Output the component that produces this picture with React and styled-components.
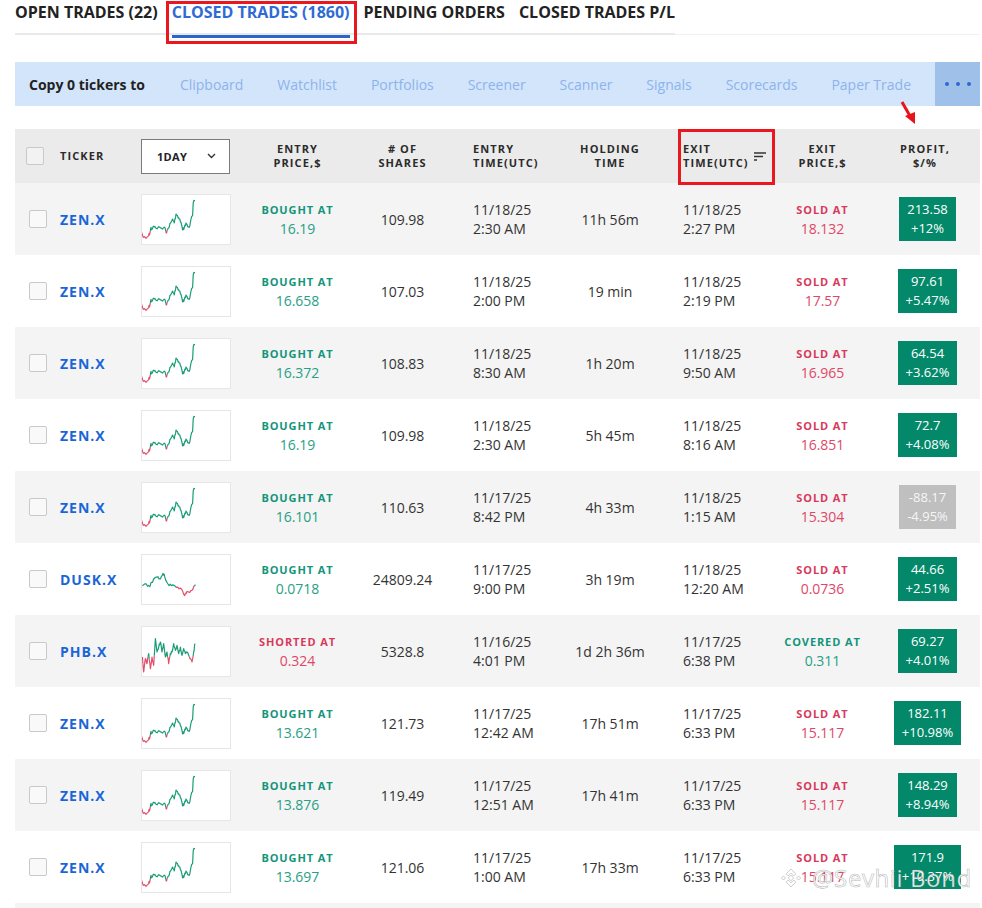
import React from 'react';
import styled, { createGlobalStyle, css } from 'styled-components';

const GlobalStyle = createGlobalStyle`
  html, body { margin: 0; padding: 0; background: #fff; }
  body { font-family: "Open Sans", "Noto Sans", Arial, sans-serif; color: #333; }
  * { box-sizing: border-box; }
`;

const GREEN_LABEL = '#12957a';
const GREEN_VALUE = '#27a085';
const RED_LABEL = '#d8395b';
const RED_VALUE = '#e04767';

const Page = styled.div`
  position: relative;
  width: 982px;
  height: 908px;
  overflow: hidden;
  padding: 0 2px 0 15px;
`;

const TabBar = styled.div`
  display: flex;
  border-bottom: 1px solid #f1f1f1;
`;

const TabList = styled.div`
  display: flex;
  gap: 14px;
  border-bottom: 2px solid #e9e9e9;
  margin-bottom: -1px;
`;

const Tab = styled.div`
  position: relative;
  font-weight: 700;
  font-size: 16px;
  line-height: 22px;
  padding: 1px 0 10px;
  white-space: nowrap;
  color: ${(p) => (p.$active ? '#2f6bd4' : '#222')};
  ${(p) =>
    p.$active &&
    css`
      &::after {
        content: '';
        position: absolute;
        left: 0;
        right: 0;
        bottom: -5px;
        height: 3px;
        background: #2a66c9;
      }
    `}
`;

const Toolbar = styled.div`
  display: flex;
  align-items: center;
  height: 44px;
  margin-top: 27px;
  background: #d3e5fb;
  padding-left: 14px;
`;

const CopyLabel = styled.div`
  font-weight: 700;
  font-size: 14px;
  color: #222;
  white-space: nowrap;
`;

const LinkList = styled.div`
  flex: 1;
  display: flex;
  justify-content: space-between;
  margin: 0 24px 0 35px;
`;

const ToolLink = styled.span`
  font-size: 14px;
  color: #8db3ec;
  white-space: nowrap;
`;

const MoreButton = styled.div`
  width: 45px;
  height: 100%;
  background: #9fc1e9;
  display: flex;
  align-items: center;
  justify-content: center;
  gap: 7px;
`;

const Dot = styled.span`
  width: 4px;
  height: 4px;
  border-radius: 50%;
  background: #2b68d4;
`;

const COLS = '40px 86px 99px 115px 95px 105px 110px 110px 95px 110px';

const Table = styled.div`
  margin-top: 23px;
`;

const HeaderRow = styled.div`
  display: grid;
  grid-template-columns: ${COLS};
  align-items: center;
  height: 54px;
  background: #ebebeb;
`;

const Row = styled.div`
  display: grid;
  grid-template-columns: ${COLS};
  align-items: center;
  height: 72px;
  background: ${(p) => (p.$shade ? '#f4f4f4' : '#fff')};
`;

const Cell = styled.div`
  display: flex;
  flex-direction: column;
  align-items: ${(p) => (p.$left ? 'flex-start' : 'center')};
  padding-left: ${(p) => p.$pl || 0}px;
  text-align: ${(p) => (p.$left ? 'left' : 'center')};
`;

const HeadLabel = styled.div`
  font-size: 11px;
  font-weight: 700;
  letter-spacing: 1.1px;
  line-height: 14px;
  color: #2b2b2b;
  white-space: nowrap;
`;

const SortHead = styled.div`
  display: flex;
  align-items: center;
  gap: 5px;
`;

const Checkbox = styled.span`
  display: block;
  width: 18px;
  height: 18px;
  margin-left: ${(p) => (p.$head ? 11 : 14)}px;
  border: 1px solid #c9c9c9;
  border-radius: 2px;
  background: ${(p) => (p.$head ? '#f2f2f2' : '#f9f9f9')};
`;

const Dropdown = styled.div`
  width: 89px;
  height: 35px;
  border: 1px solid #7a7a7a;
  background: #fff;
  display: flex;
  align-items: center;
  justify-content: space-between;
  padding: 0 13px 0 15px;
  font-size: 11px;
  font-weight: 700;
  letter-spacing: 0.3px;
  color: #222;
`;

const Ticker = styled.div`
  font-size: 14px;
  font-weight: 700;
  letter-spacing: 1px;
  color: #1a66d6;
`;

const ChartBox = styled.div`
  width: 90px;
  height: 51px;
  border: 1px solid #e6e6e6;
  background: #fff;
`;

const TradeLabel = styled.div`
  font-size: 11px;
  font-weight: 700;
  letter-spacing: 0.9px;
  line-height: 19px;
  color: ${(p) => (p.$green ? GREEN_LABEL : RED_LABEL)};
  white-space: nowrap;
`;

const TradeValue = styled.div`
  font-size: 14px;
  line-height: 19px;
  color: ${(p) => (p.$green ? GREEN_VALUE : RED_VALUE)};
`;

const Text = styled.div`
  font-size: 14px;
  line-height: 19px;
  color: #333;
  white-space: nowrap;
`;

const ProfitBox = styled.div`
  display: flex;
  flex-direction: column;
  align-items: center;
  padding: 3px 8px;
  font-size: 13px;
  line-height: 19px;
  background: ${(p) => (p.$loss ? '#bfbfbf' : '#03896a')};
  color: ${(p) => (p.$loss ? '#f6f6f6' : '#fff')};
`;

const Annotation = styled.div`
  position: absolute;
  border: 3px solid #ea1620;
`;

const Arrow = styled.svg`
  position: absolute;
  left: 897px;
  top: 99px;
`;

const Watermark = styled.div`
  position: absolute;
  left: 780px;
  top: 861px;
  display: flex;
  align-items: center;
  gap: 10px;
  pointer-events: none;
`;

const WatermarkText = styled.span`
  font-family: "Open Sans", "Noto Sans", Arial, sans-serif;
  font-size: 24px;
  line-height: 33px;
  letter-spacing: 0.6px;
  font-weight: 400;
  color: rgba(255, 255, 255, 0.9);
  -webkit-text-stroke: 0.6px rgba(110, 110, 110, 0.5);
  white-space: nowrap;
`;

/* ---------- sparkline data ---------- */
const SERIES = {
  zen: {
    base: 37,
    seed: 7,
    pts: [
      [0.6, 38.4], [2.3, 43.4], [5, 44.4], [7.6, 41.7], [9, 38.7], [10, 33.4], [10.3, 35.7],
      [13.3, 32.4], [15, 34.4], [19, 33.4], [21.6, 35], [24.3, 34.4], [25.6, 39], [27, 34.4],
      [30, 28.4], [31.6, 25], [33.3, 29], [35, 20], [37, 23.4], [38.3, 25], [40, 28.4],
      [41.6, 36], [43.3, 33.4], [45, 29], [46.6, 32.4], [48.3, 33.4], [50, 25], [51.6, 21.7],
      [52.3, 8.4], [54, 6.4],
    ],
  },
  dusk: {
    base: 33,
    seed: 3,
    pts: [
      [1.4, 31.7], [5.4, 30], [8.7, 32.7], [10.4, 28.4], [13.7, 24], [17, 22.7], [19.4, 25],
      [22, 19.4], [23.7, 22.7], [27, 30], [30.4, 31.7], [33.7, 31.7], [37, 33.4], [40.4, 35],
      [43.7, 41.7], [46, 37.4], [48.7, 38.4], [52, 35], [54.4, 30.7],
    ],
  },
  phb: {
    base: 31.5,
    seed: 11,
    pts: [
      [1.4, 31], [2.7, 46], [4.4, 32.6], [6, 37.6], [7.7, 27.6], [9.4, 42.6], [11, 31],
      [12.7, 39.3], [14.4, 12.6], [16, 26], [17.7, 21], [19.4, 16], [21, 26], [22.7, 17.6],
      [24.4, 31], [26, 26], [27.7, 37.6], [29.4, 27.6], [31, 26], [32.7, 17.6], [34.4, 24.3],
      [36, 19.3], [37.7, 27.6], [39.4, 21], [41, 29.3], [42.7, 22.6], [44.4, 27.6], [46, 26],
      [47.7, 29.3], [49.4, 32.6], [51, 36], [52.7, 26], [54, 17.6],
    ],
  },
};

function densify(pts, seed) {
  let s = seed;
  const rnd = () => {
    s = (s * 9301 + 49297) % 233280;
    return s / 233280;
  };
  const out = [];
  for (let i = 0; i < pts.length - 1; i++) {
    const [x1, y1] = pts[i];
    const [x2, y2] = pts[i + 1];
    out.push([x1, y1]);
    for (let k = 1; k < 3; k++) {
      const t = k / 3;
      out.push([x1 + (x2 - x1) * t, y1 + (y2 - y1) * t + (rnd() - 0.5) * 3]);
    }
  }
  out.push(pts[pts.length - 1]);
  return out;
}

function runs(pts, base) {
  const res = [];
  let cur = null;
  for (let i = 0; i < pts.length - 1; i++) {
    const red = (pts[i][1] + pts[i + 1][1]) / 2 > base;
    if (!cur || cur.red !== red) {
      cur = { red, pts: [pts[i]] };
      res.push(cur);
    }
    cur.pts.push(pts[i + 1]);
  }
  return res;
}

const CHARTS = Object.fromEntries(
  Object.entries(SERIES).map(([k, v]) => [k, runs(densify(v.pts, v.seed), v.base)])
);

function Sparkline({ kind }) {
  return (
    <ChartBox>
      <svg width="88" height="49" viewBox="1 1 88 49">
        {CHARTS[kind].map((r, i) => (
          <polyline
            key={i}
            points={r.pts.map((p) => `${p[0].toFixed(2)},${p[1].toFixed(2)}`).join(' ')}
            fill="none"
            stroke={r.red ? '#e0506b' : '#1b9c78'}
            strokeWidth="1.2"
            strokeLinejoin="round"
          />
        ))}
      </svg>
    </ChartBox>
  );
}

const ROWS = [
  { t: 'ZEN.X', c: 'zen', entry: '16.19', shares: '109.98', et: ['11/18/25', '2:30 AM'], hold: '11h 56m', xt: ['11/18/25', '2:27 PM'], exit: '18.132', p: '213.58', pct: '+12%' },
  { t: 'ZEN.X', c: 'zen', entry: '16.658', shares: '107.03', et: ['11/18/25', '2:00 PM'], hold: '19 min', xt: ['11/18/25', '2:19 PM'], exit: '17.57', p: '97.61', pct: '+5.47%' },
  { t: 'ZEN.X', c: 'zen', entry: '16.372', shares: '108.83', et: ['11/18/25', '8:30 AM'], hold: '1h 20m', xt: ['11/18/25', '9:50 AM'], exit: '16.965', p: '64.54', pct: '+3.62%' },
  { t: 'ZEN.X', c: 'zen', entry: '16.19', shares: '109.98', et: ['11/18/25', '2:30 AM'], hold: '5h 45m', xt: ['11/18/25', '8:16 AM'], exit: '16.851', p: '72.7', pct: '+4.08%' },
  { t: 'ZEN.X', c: 'zen', entry: '16.101', shares: '110.63', et: ['11/17/25', '8:42 PM'], hold: '4h 33m', xt: ['11/18/25', '1:15 AM'], exit: '15.304', p: '-88.17', pct: '-4.95%', loss: true },
  { t: 'DUSK.X', c: 'dusk', entry: '0.0718', shares: '24809.24', et: ['11/17/25', '9:00 PM'], hold: '3h 19m', xt: ['11/18/25', '12:20 AM'], exit: '0.0736', p: '44.66', pct: '+2.51%' },
  { t: 'PHB.X', c: 'phb', short: true, entry: '0.324', shares: '5328.8', et: ['11/16/25', '4:01 PM'], hold: '1d 2h 36m', xt: ['11/17/25', '6:38 PM'], exit: '0.311', p: '69.27', pct: '+4.01%' },
  { t: 'ZEN.X', c: 'zen', entry: '13.621', shares: '121.73', et: ['11/17/25', '12:42 AM'], hold: '17h 51m', xt: ['11/17/25', '6:33 PM'], exit: '15.117', p: '182.11', pct: '+10.98%' },
  { t: 'ZEN.X', c: 'zen', entry: '13.876', shares: '119.49', et: ['11/17/25', '12:51 AM'], hold: '17h 41m', xt: ['11/17/25', '6:33 PM'], exit: '15.117', p: '148.29', pct: '+8.94%' },
  { t: 'ZEN.X', c: 'zen', entry: '13.697', shares: '121.06', et: ['11/17/25', '1:00 AM'], hold: '17h 33m', xt: ['11/17/25', '6:33 PM'], exit: '15.117', p: '171.9', pct: '+10.37%' },
];

const LINKS = ['Clipboard', 'Watchlist', 'Portfolios', 'Screener', 'Scanner', 'Signals', 'Scorecards', 'Paper Trade'];

function Chevron() {
  return (
    <svg width="9" height="6" viewBox="0 0 9 6">
      <polyline points="1,1 4.5,4.5 8,1" fill="none" stroke="#333" strokeWidth="1.4" />
    </svg>
  );
}

function SortIcon() {
  return (
    <svg width="12" height="9" viewBox="0 0 12 9">
      <line x1="0" y1="1" x2="12" y2="1" stroke="#333" strokeWidth="1.5" />
      <line x1="0" y1="4.5" x2="9" y2="4.5" stroke="#333" strokeWidth="1.5" />
      <line x1="0" y1="8" x2="3" y2="8" stroke="#333" strokeWidth="1.5" />
    </svg>
  );
}

function WatermarkLogo() {
  const sq = (cx, cy, r) => `${cx},${cy - r} ${cx + r},${cy} ${cx},${cy + r} ${cx - r},${cy}`;
  return (
    <svg width="22" height="22" viewBox="0 0 32 32">
      <g fill="rgba(255,255,255,0.9)" stroke="rgba(120,120,120,0.5)" strokeWidth="1.1">
        <polygon points={sq(16, 16, 4)} />
        <polygon points={sq(5, 16, 3)} />
        <polygon points={sq(27, 16, 3)} />
        <polyline points="9,10 16,3 23,10 20,13 16,9 12,13 9,10" />
        <polyline points="9,22 16,29 23,22 20,19 16,23 12,19 9,22" />
      </g>
    </svg>
  );
}

export default function App() {
  return (
    <Page>
      <GlobalStyle />
      <TabBar>
        <TabList>
          <Tab>OPEN TRADES (22)</Tab>
          <Tab $active>CLOSED TRADES (1860)</Tab>
          <Tab>PENDING ORDERS</Tab>
          <Tab>CLOSED TRADES P/L</Tab>
        </TabList>
      </TabBar>

      <Toolbar>
        <CopyLabel>Copy 0 tickers to</CopyLabel>
        <LinkList>
          {LINKS.map((l) => (
            <ToolLink key={l}>{l}</ToolLink>
          ))}
        </LinkList>
        <MoreButton>
          <Dot />
          <Dot />
          <Dot />
        </MoreButton>
      </Toolbar>

      <Table>
        <HeaderRow>
          <Cell $left>
            <Checkbox $head />
          </Cell>
          <Cell $left $pl={5}>
            <HeadLabel>TICKER</HeadLabel>
          </Cell>
          <Cell $left>
            <Dropdown>
              <span>1DAY</span>
              <Chevron />
            </Dropdown>
          </Cell>
          <Cell>
            <HeadLabel>ENTRY<br />PRICE,$</HeadLabel>
          </Cell>
          <Cell>
            <HeadLabel># OF<br />SHARES</HeadLabel>
          </Cell>
          <Cell $left $pl={23}>
            <HeadLabel>ENTRY<br />TIME(UTC)</HeadLabel>
          </Cell>
          <Cell>
            <HeadLabel>HOLDING<br />TIME</HeadLabel>
          </Cell>
          <Cell $left $pl={18}>
            <SortHead>
              <HeadLabel>EXIT<br />TIME(UTC)</HeadLabel>
              <SortIcon />
            </SortHead>
          </Cell>
          <Cell>
            <HeadLabel>EXIT<br />PRICE,$</HeadLabel>
          </Cell>
          <Cell>
            <HeadLabel>PROFIT,<br />$/%</HeadLabel>
          </Cell>
        </HeaderRow>

        {ROWS.map((r, i) => (
          <Row key={i} $shade={i % 2 === 0}>
            <Cell $left>
              <Checkbox />
            </Cell>
            <Cell $left $pl={5}>
              <Ticker>{r.t}</Ticker>
            </Cell>
            <Cell $left>
              <Sparkline kind={r.c} />
            </Cell>
            <Cell>
              <TradeLabel $green={!r.short}>{r.short ? 'SHORTED AT' : 'BOUGHT AT'}</TradeLabel>
              <TradeValue $green={!r.short}>{r.entry}</TradeValue>
            </Cell>
            <Cell>
              <Text>{r.shares}</Text>
            </Cell>
            <Cell $left $pl={23}>
              <Text>{r.et[0]}</Text>
              <Text>{r.et[1]}</Text>
            </Cell>
            <Cell>
              <Text>{r.hold}</Text>
            </Cell>
            <Cell $left $pl={18}>
              <Text>{r.xt[0]}</Text>
              <Text>{r.xt[1]}</Text>
            </Cell>
            <Cell>
              <TradeLabel $green={r.short}>{r.short ? 'COVERED AT' : 'SOLD AT'}</TradeLabel>
              <TradeValue $green={r.short}>{r.exit}</TradeValue>
            </Cell>
            <Cell $pl={5}>
              <ProfitBox $loss={r.loss}>
                <span>{r.p}</span>
                <span>{r.pct}</span>
              </ProfitBox>
            </Cell>
          </Row>
        ))}
        <Row $shade />
      </Table>

      <Annotation style={{ left: 166, top: 1, width: 191, height: 43 }} />
      <Annotation style={{ left: 678, top: 129, width: 97, height: 56 }} />
      <Arrow width="22" height="28" viewBox="0 0 22 28">
        <line x1="5" y1="3" x2="13" y2="17" stroke="#e8141c" strokeWidth="3" />
        <polygon points="8,17 18,13 18,25" fill="#e8141c" />
      </Arrow>

      <Watermark>
        <WatermarkLogo />
        <WatermarkText>@Sevhii Bond</WatermarkText>
      </Watermark>
    </Page>
  );
}
